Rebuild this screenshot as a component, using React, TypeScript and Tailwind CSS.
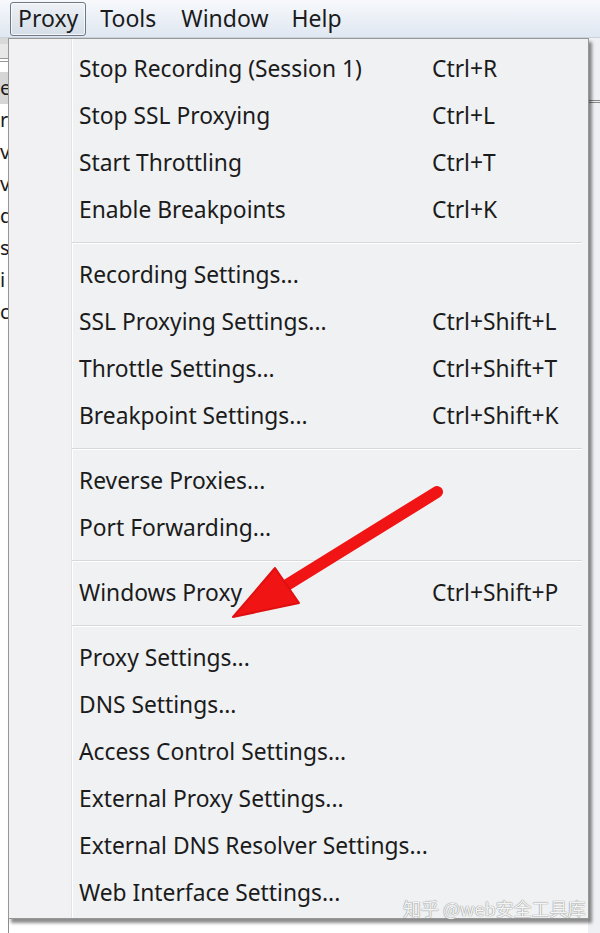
import React from "react";

type Item = { label: string; shortcut?: string } | "sep";

const items: Item[] = [
  { label: "Stop Recording (Session 1)", shortcut: "Ctrl+R" },
  { label: "Stop SSL Proxying", shortcut: "Ctrl+L" },
  { label: "Start Throttling", shortcut: "Ctrl+T" },
  { label: "Enable Breakpoints", shortcut: "Ctrl+K" },
  "sep",
  { label: "Recording Settings..." },
  { label: "SSL Proxying Settings...", shortcut: "Ctrl+Shift+L" },
  { label: "Throttle Settings...", shortcut: "Ctrl+Shift+T" },
  { label: "Breakpoint Settings...", shortcut: "Ctrl+Shift+K" },
  "sep",
  { label: "Reverse Proxies..." },
  { label: "Port Forwarding..." },
  "sep",
  { label: "Windows Proxy", shortcut: "Ctrl+Shift+P" },
  "sep",
  { label: "Proxy Settings..." },
  { label: "DNS Settings..." },
  { label: "Access Control Settings..." },
  { label: "External Proxy Settings..." },
  { label: "External DNS Resolver Settings..." },
  { label: "Web Interface Settings..." },
];

const bgLetters = [
  { t: "e", gray: true },
  { t: "r" },
  { t: "v." },
  { t: "v." },
  { t: "d" },
  { t: "s" },
  { t: "i" },
  { t: "c" },
];

export default function App() {
  return (
    <div
      className="relative w-[600px] h-[933px] overflow-hidden bg-white text-[#1b1b1b]"
      style={{ fontFamily: "'Noto Sans', 'Open Sans', sans-serif" }}
    >
      {/* Menu bar */}
      <div className="flex h-[38px] items-center bg-gradient-to-b from-[#f7f9fc] to-[#dfe7f1] border-b border-[#c9d2dd] pl-[10px] text-[23px]">
        <div className="flex h-[34px] items-center rounded-[3px] border border-[#6e7784] bg-gradient-to-b from-[#eef2f7] to-[#d5dde7] px-[7px] shadow-[inset_0_0_0_1px_rgba(255,255,255,0.7)]">
          Proxy
        </div>
        <div className="ml-[14px]">Tools</div>
        <div className="ml-[25px]">Window</div>
        <div className="ml-[23px]">Help</div>
      </div>

      {/* Background app content */}
      <div className="flex h-[895px]">
        <div className="w-[9px] flex flex-col overflow-hidden text-[20px] leading-none border-r border-[#8c8c8c]">
          <div className="h-[6px] bg-[#d9d9d9]" />
          <div className="h-[14px] bg-[#e8e8e8]" />
          <div className="h-[4px] border-y border-[#999]" />
          <div className="h-[10px]" />
          {bgLetters.map((l, i) => (
            <div
              key={i}
              className={`h-[32px] flex items-center ${l.gray ? "bg-[#d6d6d6]" : ""}`}
            >
              {l.t}
            </div>
          ))}
        </div>
        <div className="flex-1" />
        <div className="w-[12px] bg-[#eef0f3] flex flex-col">
          <div className="h-[62px]" />
          <div className="h-[3px] border-y border-[#888]" />
        </div>
      </div>

      {/* Dropdown menu */}
      <div className="absolute left-[8px] top-[38px] w-[581px] h-[881px] border border-[#979797] bg-[#eff1f3] shadow-[3px_4px_3px_rgba(0,0,0,0.45)] flex">
        <div className="w-[63px] bg-[#f1f1f4] border-r border-[#e2e3e4] shadow-[1px_0_0_#ffffff]" />
        <div className="flex-1 flex flex-col pt-[7px] text-[22.8px]">
          {items.map((it, i) =>
            it === "sep" ? (
              <div key={i} className="h-[18px] flex items-center pr-[6px]">
                <div className="w-full h-[2px] border-t border-[#d7d8d9] border-b border-b-white" />
              </div>
            ) : (
              <div key={i} className="h-[47px] flex items-center">
                <div className="w-[360px] pl-[7px] whitespace-nowrap">{it.label}</div>
                <div className="whitespace-nowrap">{it.shortcut ?? ""}</div>
              </div>
            )
          )}
        </div>

        {/* Watermark */}
        <div
          className="absolute left-[394px] top-[856px] text-[18px] text-[#f4f4f4] whitespace-nowrap"
          style={{
            fontFamily: "'Noto Sans CJK SC', 'Noto Sans', sans-serif",
            textShadow: "0 0 1px #8a8a8a, 0 0 1px #8a8a8a",
          }}
        >
          知乎 @web安全工具库
        </div>
      </div>

      {/* Red arrow */}
      <svg className="absolute left-0 top-0" width="600" height="933" viewBox="0 0 600 933">
        <line x1="437" y1="492" x2="282" y2="588" stroke="#f01414" strokeWidth="12" strokeLinecap="round" />
        <polygon points="233,617 275,568 299,603" fill="#f01414" stroke="#e01010" strokeWidth="2" strokeLinejoin="round" />
      </svg>
    </div>
  );
}
